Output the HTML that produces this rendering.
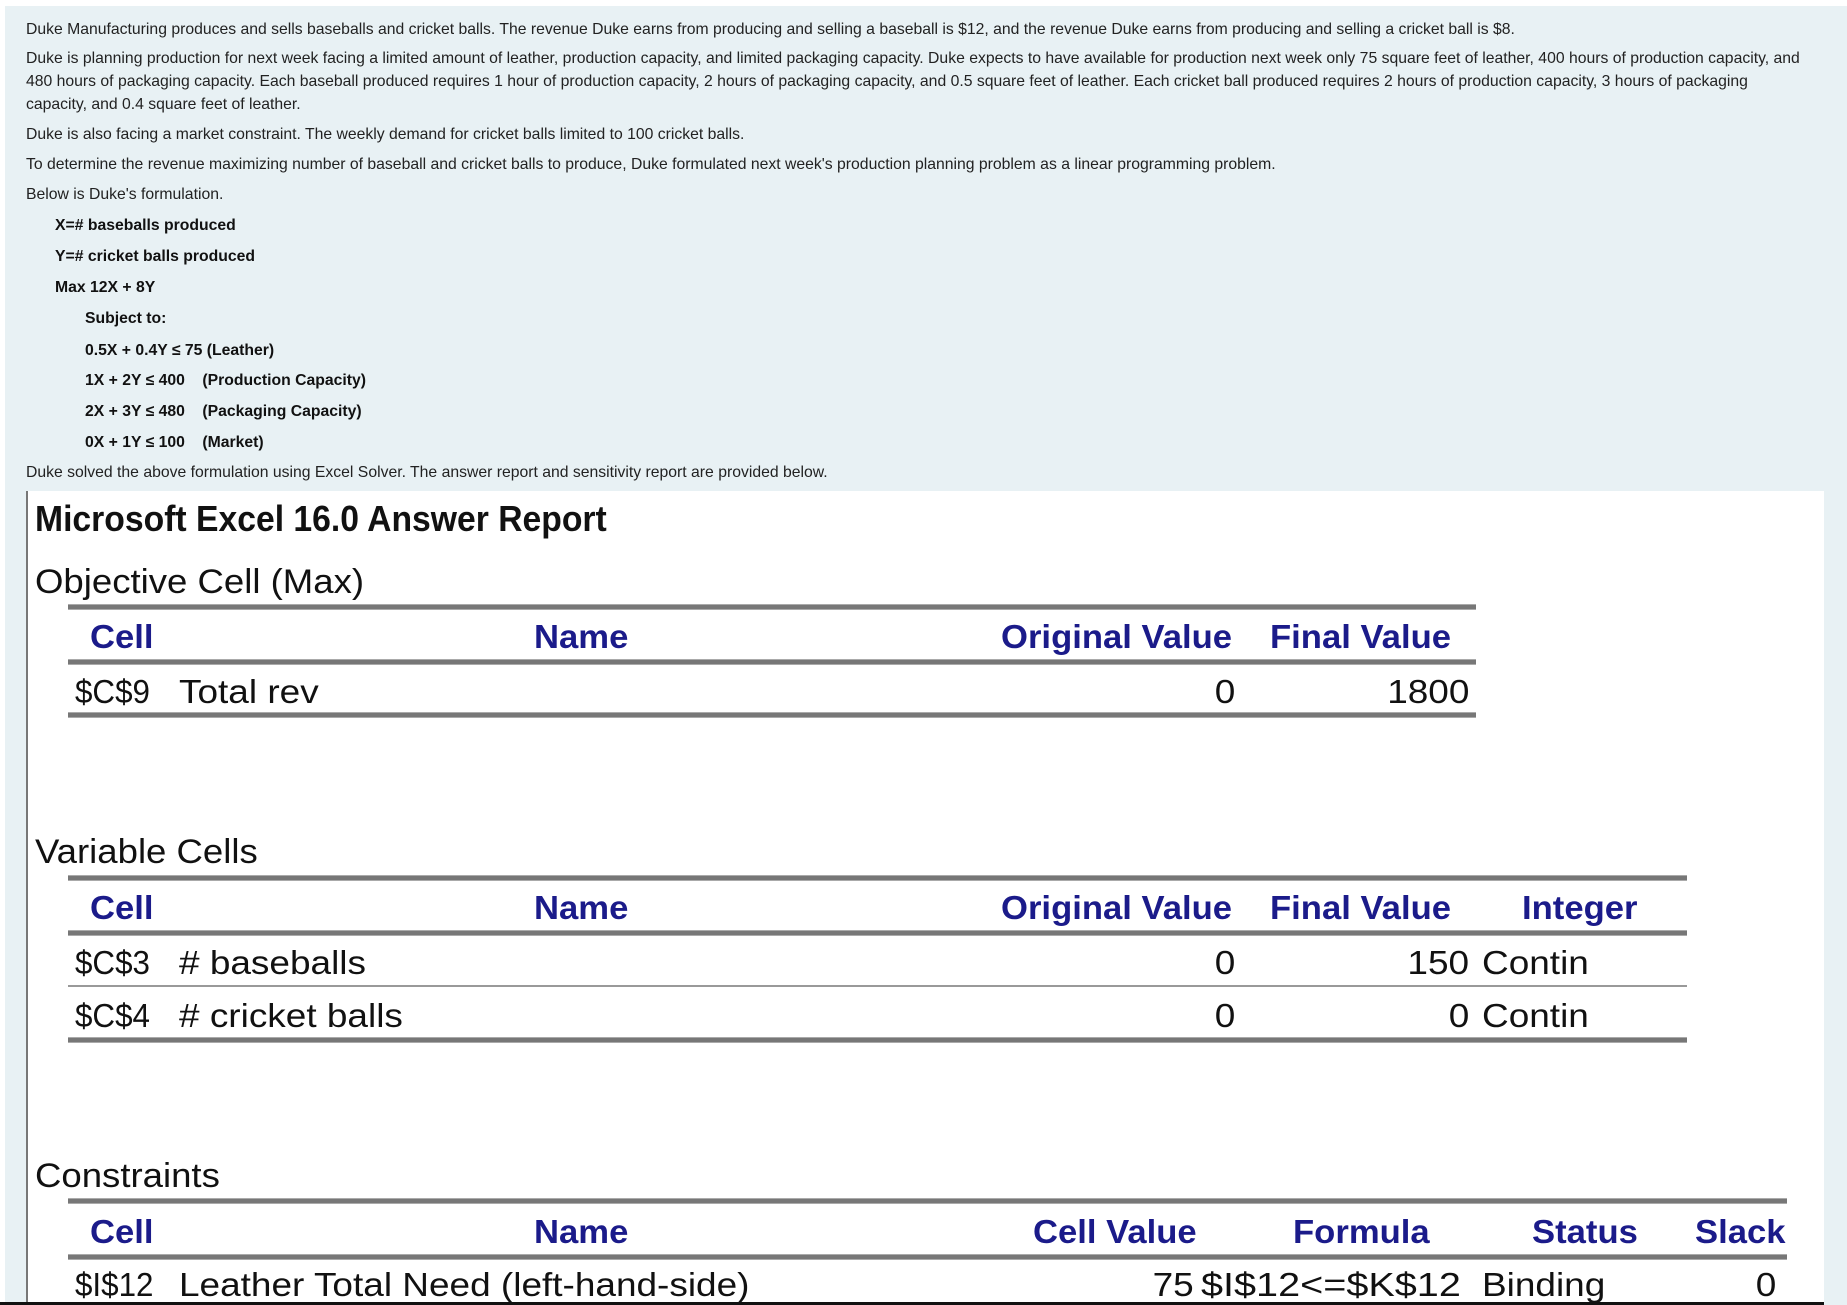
<!DOCTYPE html>
<html><head><meta charset="utf-8"><style>
body{margin:0;width:1847px;height:1305px;background:#fff;overflow:hidden;position:relative;font-family:"Liberation Sans",Arial,sans-serif}
#bg{position:absolute;left:5px;top:6px;width:1842px;height:1299px;background:#e8f1f4}
.p{position:absolute;left:26px;font-size:15.75px;color:#222;white-space:nowrap;line-height:23px}
.b{font-weight:bold;color:#111}
#img{position:absolute;left:26px;top:491px;width:1798px;height:812px;background:#fff}
#lb{position:absolute;left:26px;top:491px;width:2px;height:812px;background:#777}
#bot{position:absolute;left:0;top:1302px;width:1824px;height:3px;background:#111}
.x{position:absolute;white-space:nowrap;line-height:1;transform:scaleX(1.05);transform-origin:left center}
.r{transform-origin:right center}
.h{font-weight:bold;color:#1b1b8a;font-size:33px}
.v{color:#111;font-size:33px;transform:scaleX(1.12)}
.c{transform:scaleX(.95)}
.bar{position:absolute;left:68px;height:4px;background:#777;border-top:1px solid #aaa;border-bottom:1px solid #aaa}
.thin{position:absolute;left:68px;height:2px;background:#999}
.s{font-size:34px;color:#111;transform:scaleX(1.075)}
</style></head><body>
<div id="bg"></div>
<div class="p" style="top:18px">Duke Manufacturing produces and sells baseballs and cricket balls. The revenue Duke earns from producing and selling a baseball is $12, and the revenue Duke earns from producing and selling a cricket ball is $8.</div>
<div class="p" style="top:47px">Duke is planning production for next week facing a limited amount of leather, production capacity, and limited packaging capacity. Duke expects to have available for production next week only 75 square feet of leather, 400 hours of production capacity, and<br>480 hours of packaging capacity. Each baseball produced requires 1 hour of production capacity, 2 hours of packaging capacity, and 0.5 square feet of leather. Each cricket ball produced requires 2 hours of production capacity, 3 hours of packaging<br>capacity, and 0.4 square feet of leather.</div>
<div class="p" style="top:123px">Duke is also facing a market constraint. The weekly demand for cricket balls limited to 100 cricket balls.</div>
<div class="p" style="top:153px">To determine the revenue maximizing number of baseball and cricket balls to produce, Duke formulated next week's production planning problem as a linear programming problem.</div>
<div class="p" style="top:183px">Below is Duke's formulation.</div>
<div class="p b" style="top:214px;left:55px">X=# baseballs produced</div>
<div class="p b" style="top:245px;left:55px">Y=# cricket balls produced</div>
<div class="p b" style="top:276px;left:55px">Max 12X + 8Y</div>
<div class="p b" style="top:307px;left:85px">Subject to:</div>
<div class="p b" style="top:339px;left:85px">0.5X + 0.4Y ≤ 75 (Leather)</div>
<div class="p b" style="top:369px;left:85px">1X + 2Y ≤ 400&nbsp;&nbsp;&nbsp; (Production Capacity)</div>
<div class="p b" style="top:400px;left:85px">2X + 3Y ≤ 480&nbsp;&nbsp;&nbsp; (Packaging Capacity)</div>
<div class="p b" style="top:431px;left:85px">0X + 1Y ≤ 100&nbsp;&nbsp;&nbsp; (Market)</div>
<div class="p" style="top:461px">Duke solved the above formulation using Excel Solver. The answer report and sensitivity report are provided below.</div>
<div id="img"></div><div id="lb"></div>

<div class="x" style="left:35px;top:501px;font-size:36px;font-weight:bold;color:#111;transform:scaleX(.936)">Microsoft Excel 16.0 Answer Report</div>
<div class="x s" style="left:35px;top:565px">Objective Cell (Max)</div>
<div class="bar" style="top:604px;width:1408px"></div>
<div class="x h" style="left:90px;top:620px">Cell</div>
<div class="x h" style="left:534px;top:620px">Name</div>
<div class="x h" style="left:1001px;top:620px">Original Value</div>
<div class="x h" style="left:1270px;top:620px">Final Value</div>
<div class="bar" style="top:659px;width:1408px"></div>
<div class="x v c" style="left:75px;top:675px">$C$9</div>
<div class="x v" style="left:179px;top:675px">Total rev</div>
<div class="x v r" style="right:612px;top:675px">0</div>
<div class="x v r" style="right:378px;top:675px">1800</div>
<div class="bar" style="top:712px;width:1408px"></div>

<div class="x s" style="left:35px;top:835px">Variable Cells</div>
<div class="bar" style="top:875px;width:1619px"></div>
<div class="x h" style="left:90px;top:891px">Cell</div>
<div class="x h" style="left:534px;top:891px">Name</div>
<div class="x h" style="left:1001px;top:891px">Original Value</div>
<div class="x h" style="left:1270px;top:891px">Final Value</div>
<div class="x h" style="left:1522px;top:891px">Integer</div>
<div class="bar" style="top:930px;width:1619px"></div>
<div class="x v c" style="left:75px;top:946px">$C$3</div>
<div class="x v" style="left:179px;top:946px"># baseballs</div>
<div class="x v r" style="right:612px;top:946px">0</div>
<div class="x v r" style="right:378px;top:946px">150</div>
<div class="x v" style="left:1482px;top:946px">Contin</div>
<div class="thin" style="top:985px;width:1619px"></div>
<div class="x v c" style="left:75px;top:999px">$C$4</div>
<div class="x v" style="left:179px;top:999px"># cricket balls</div>
<div class="x v r" style="right:612px;top:999px">0</div>
<div class="x v r" style="right:378px;top:999px">0</div>
<div class="x v" style="left:1482px;top:999px">Contin</div>
<div class="bar" style="top:1037px;width:1619px"></div>

<div class="x s" style="left:35px;top:1159px">Constraints</div>
<div class="bar" style="top:1198px;width:1719px"></div>
<div class="x h" style="left:90px;top:1215px">Cell</div>
<div class="x h" style="left:534px;top:1215px">Name</div>
<div class="x h" style="left:1033px;top:1215px">Cell Value</div>
<div class="x h" style="left:1293px;top:1215px">Formula</div>
<div class="x h" style="left:1532px;top:1215px">Status</div>
<div class="x h" style="left:1695px;top:1215px">Slack</div>
<div class="bar" style="top:1254px;width:1719px"></div>
<div class="x v c" style="left:75px;top:1268px">$I$12</div>
<div class="x v" style="left:179px;top:1268px">Leather Total Need (left-hand-side)</div>
<div class="x v r" style="right:653px;top:1268px">75</div>
<div class="x v" style="left:1201px;top:1268px;transform:scaleX(1.2)">$I$12&lt;=$K$12</div>
<div class="x v" style="left:1482px;top:1268px">Binding</div>
<div class="x v r" style="right:71px;top:1268px">0</div>
<div id="bot"></div>
</body></html>
